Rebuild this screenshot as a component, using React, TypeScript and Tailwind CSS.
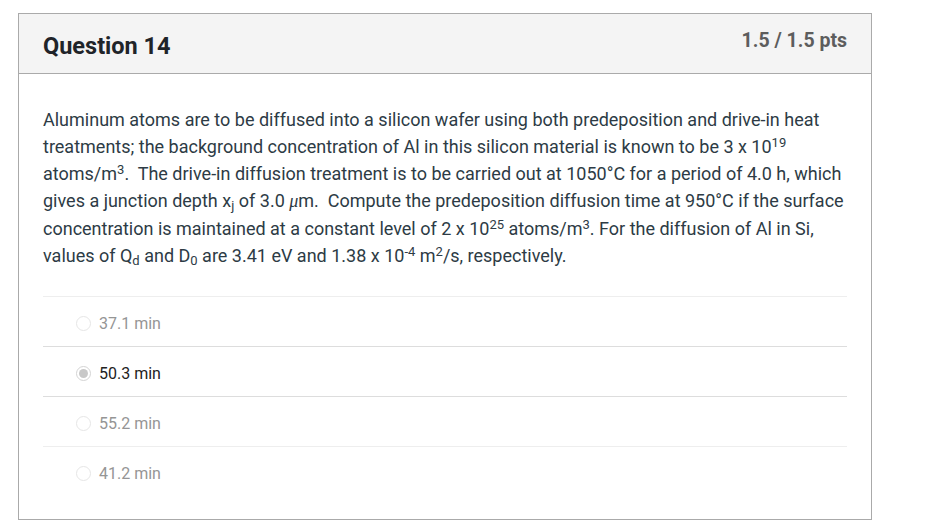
import React from "react";

const answers = [
    { label: "37.1 min", selected: false },
    { label: "50.3 min", selected: true },
    { label: "55.2 min", selected: false },
    { label: "41.2 min", selected: false },
];

function Radio({ selected }: { selected: boolean }) {
    if (selected) {
        return (
            <span className="flex h-[15px] w-[15px] items-center justify-center rounded-full border border-[#d4d4d4] bg-white">
                <span className="h-[9px] w-[9px] rounded-full bg-[#c8c8c8]" />
            </span>
        );
    }
    return <span className="h-[15px] w-[15px] rounded-full border border-[#e6e6e6] bg-white" />;
}

const sup = "text-[13px]";
const sub = "text-[13px]";

export default function App() {
    return (
        <div className="min-h-[530px] bg-white pl-[18px] pt-[13px] font-['Roboto',sans-serif]">
            <div className="flex h-[507px] w-[854px] flex-col border border-[#aaaaaa] bg-white">
                {/* Header */}
                <div className="flex h-[60px] shrink-0 items-start justify-between border-b border-[#aaaaaa] bg-[#f4f4f4] px-6">
                    <h2 className="mt-[18px] text-[23.5px] font-bold leading-[28px] text-[#1f2429]">Question 14</h2>
                    <div className="mt-[15px] text-[19.5px] font-bold leading-[24px] text-[#5d5d5d]">1.5 / 1.5 pts</div>
                </div>

                {/* Body */}
                <div className="px-6 pt-[32px]">
                    <p className="whitespace-nowrap text-[18px] leading-[27px] text-[#2d3b45]">
                        Aluminum atoms are to be diffused into a silicon wafer using both predeposition and drive-in heat
                        <br />
                        treatments; the background concentration of Al in this silicon material is known to be 3 x 10<sup className={sup}>19</sup>
                        <br />
                        atoms/m<sup className={sup}>3</sup>.&nbsp; The drive-in diffusion treatment is to be carried out at 1050°C for a period of 4.0 h, which
                        <br />
                        gives a junction depth x<sub className={sub}>j</sub> of 3.0 <i className="font-['Liberation_Serif',serif]">μ</i>m.&nbsp; Compute the predeposition diffusion time at 950°C if the surface
                        <br />
                        concentration is maintained at a constant level of 2 x 10<sup className={sup}>25</sup> atoms/m<sup className={sup}>3</sup>. For the diffusion of Al in Si,
                        <br />
                        values of Q<sub className={sub}>d</sub> and D<sub className={sub}>0</sub> are 3.41 eV and 1.38 x 10<sup className={sup}>-4</sup> m<sup className={sup}>2</sup>/s, respectively.
                    </p>

                    <div className="mt-[27px]">
                        {answers.map((a, i) => (
                            <div
                                key={a.label}
                                className={`flex h-[50px] items-center gap-[8px] border-t pl-[33px] pt-[4px] ${i === 1 || i === 2 ? "border-[#dddddd]" : "border-[#eeeeee]"}`}
                            >
                                <Radio selected={a.selected} />
                                <span className={`text-[16px] ${a.selected ? "text-[#222222]" : "text-[#959595]"}`}>{a.label}</span>
                            </div>
                        ))}
                    </div>
                </div>
            </div>
        </div>
    );
}
